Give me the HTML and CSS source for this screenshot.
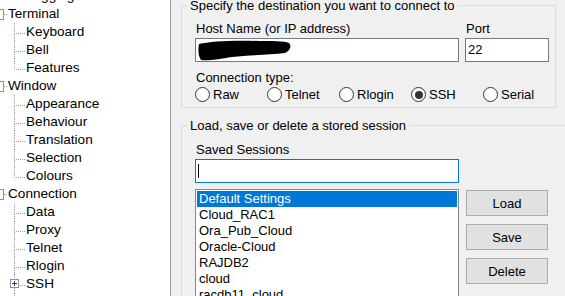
FILE: index.html
```html
<!DOCTYPE html>
<html lang="en">
<head>
    <meta charset="UTF-8">
    <title>PuTTY Configuration</title>
    <link rel="stylesheet" href="styles.css">
</head>
<body>
    <div class="window">
        <!-- Category tree -->
        <div class="tree">
            <div class="item last">Logging</div>
            <div class="root">Terminal</div>
            <div class="item">Keyboard</div>
            <div class="item">Bell</div>
            <div class="item last">Features</div>
            <div class="root">Window</div>
            <div class="item">Appearance</div>
            <div class="item">Behaviour</div>
            <div class="item">Translation</div>
            <div class="item">Selection</div>
            <div class="item last">Colours</div>
            <div class="root">Connection</div>
            <div class="item">Data</div>
            <div class="item">Proxy</div>
            <div class="item">Telnet</div>
            <div class="item">Rlogin</div>
            <div class="item"><span class="expander"></span>SSH</div>
            <div class="item last">Serial</div>
        </div>

        <!-- Session panel -->
        <div class="panel">
            <fieldset class="box box-dest">
                <legend>Specify the destination you want to connect to</legend>
                <div class="box-body">
                    <div class="host-row">
                        <div class="host-col">
                            <div class="label">Host Name (or IP address)</div>
                            <div class="field">
                                <svg class="redact" width="94" height="22" viewBox="0 0 94 22">
                                    <path d="M1 4 C12 1 38 0 60 1 C74 1 86 1 91 3 C94 6 92 11 87 13 C72 15 50 15 34 17 C22 19 10 21 3 20 C0 16 0 9 1 4 Z" fill="#000"/>
                                </svg>
                            </div>
                        </div>
                        <div class="port-col">
                            <div class="label">Port</div>
                            <div class="field">22</div>
                        </div>
                    </div>
                    <div class="label conn-label">Connection type:</div>
                    <div class="radios">
                        <div class="radio"><span class="dot"></span>Raw</div>
                        <div class="radio"><span class="dot"></span>Telnet</div>
                        <div class="radio"><span class="dot"></span>Rlogin</div>
                        <div class="radio"><span class="dot checked"></span>SSH</div>
                        <div class="radio"><span class="dot"></span>Serial</div>
                    </div>
                </div>
            </fieldset>

            <fieldset class="box box-sessions">
                <legend>Load, save or delete a stored session</legend>
                <div class="box-body">
                    <div class="label">Saved Sessions</div>
                    <div class="field focused"><span class="caret"></span></div>
                    <div class="session-row">
                        <div class="listbox">
                            <div class="entry selected">Default Settings</div>
                            <div class="entry">Cloud_RAC1</div>
                            <div class="entry">Ora_Pub_Cloud</div>
                            <div class="entry">Oracle-Cloud</div>
                            <div class="entry">RAJDB2</div>
                            <div class="entry">cloud</div>
                            <div class="entry">racdb11_cloud</div>
                        </div>
                        <div class="buttons">
                            <button>Load</button>
                            <button>Save</button>
                            <button>Delete</button>
                        </div>
                    </div>
                </div>
            </fieldset>
        </div>
    </div>
</body>
</html>
```

FILE: styles.css
```css
* {
    margin: 0;
    padding: 0;
    box-sizing: border-box;
}
body {
    font-family: "Liberation Sans", Arial, sans-serif;
    color: #000;
    overflow: hidden;
}
.window {
    display: flex;
    height: 296px;
    overflow: hidden;
}

/* Tree */
.tree {
    width: 171px;
    flex-shrink: 0;
    background: #fff;
    border-right: 1px solid #a0a0a0;
    font-size: 13.6px;
    margin-top: -13px;
}
.root,
.item {
    position: relative;
    height: 18px;
    line-height: 18px;
    white-space: nowrap;
}
.root {
    padding-left: 8px;
}
.root::before {
    content: "";
    position: absolute;
    left: -7px;
    top: 4px;
    width: 9px;
    height: 9px;
    border: 1px solid #919191;
}
.root::after {
    content: "";
    position: absolute;
    left: 3px;
    top: 9px;
    width: 4px;
    border-top: 1px dotted #a0a0a0;
}
.item {
    padding-left: 26px;
}
.item::before {
    content: "";
    position: absolute;
    left: 14px;
    top: 0;
    width: 10px;
    height: 10px;
    border-left: 1px dotted #a0a0a0;
    border-bottom: 1px dotted #a0a0a0;
}
.item:not(.last)::after {
    content: "";
    position: absolute;
    left: 14px;
    top: 10px;
    bottom: 0;
    border-left: 1px dotted #a0a0a0;
}
.expander {
    position: absolute;
    left: 10px;
    top: 4px;
    width: 9px;
    height: 9px;
    border: 1px solid #919191;
    background: #fff;
    z-index: 1;
}
.expander::before,
.expander::after {
    content: "";
    position: absolute;
    background: #1e3c8c;
}
.expander::before {
    left: 1px;
    top: 3px;
    width: 5px;
    height: 1px;
}
.expander::after {
    left: 3px;
    top: 1px;
    width: 1px;
    height: 5px;
}

/* Panel */
.panel {
    flex: 1;
    background: #f0f0f0;
    padding-left: 10px;
    font-size: 13px;
}
.box {
    border: 1px solid #dcdcdc;
    padding: 0;
}
.box legend {
    margin-left: 5px;
    padding: 0 3px;
    line-height: 15px;
}
.box-dest {
    margin: -2px 11px 0 0;
}
.box-dest .box-body {
    padding: 8px 0 5px 13px;
}
.box-sessions {
    margin: 10px 1px 0 0;
}
.box-sessions .box-body {
    padding: 9px 0 0 13px;
}
.label {
    line-height: 15px;
    padding-left: 1px;
    margin-bottom: 2px;
}
.host-row {
    display: flex;
    gap: 6px;
}
.host-col {
    width: 264px;
}
.port-col {
    width: 84px;
}
.field {
    height: 24px;
    background: #fff;
    border: 1px solid #7a7a7a;
    line-height: 22px;
    padding-left: 2px;
}
.redact {
    display: block;
    margin-top: 1px;
}
.conn-label {
    margin-top: 8px;
}
.radios {
    display: grid;
    grid-template-columns: repeat(5, 72px);
    height: 15px;
}
.radio {
    display: flex;
    align-items: center;
    gap: 3px;
    line-height: 15px;
}
.dot {
    width: 15px;
    height: 15px;
    border-radius: 50%;
    border: 1px solid #333;
    background: #fff;
    display: flex;
    align-items: center;
    justify-content: center;
}
.dot.checked::after {
    content: "";
    width: 8px;
    height: 8px;
    border-radius: 50%;
    background: #333;
}
.box-sessions .field {
    width: 264px;
}
.field.focused {
    border-color: #0078d7;
}
.caret {
    display: block;
    width: 1px;
    height: 14px;
    margin-top: 4px;
    background: #000;
}
.session-row {
    display: flex;
    gap: 7px;
    margin-top: 6px;
}
.listbox {
    width: 264px;
    height: 130px;
    background: #fff;
    border: 1px solid #828790;
    padding: 1px;
}
.entry {
    height: 16px;
    line-height: 16px;
    padding-left: 2px;
    white-space: nowrap;
}
.entry.selected {
    background: #0078d7;
    color: #fff;
}
.buttons {
    display: flex;
    flex-direction: column;
    gap: 8px;
    margin-top: 1px;
}
.buttons button {
    width: 82px;
    height: 26px;
    background: #e1e1e1;
    border: 1px solid #adadad;
    font-family: inherit;
    font-size: 13px;
    color: #000;
}
```
